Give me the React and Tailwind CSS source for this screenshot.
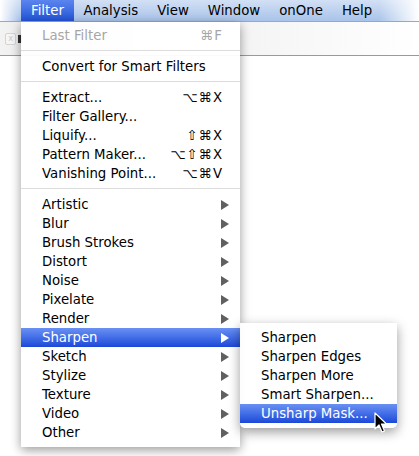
import clsx from "clsx";

const mainItems = [
  { label: "Last Filter", shortcut: "⌘F", disabled: true },
  { sep: true },
  { label: "Convert for Smart Filters" },
  { sep: true },
  { label: "Extract...", shortcut: "⌥⌘X" },
  { label: "Filter Gallery..." },
  { label: "Liquify...", shortcut: "⇧⌘X" },
  { label: "Pattern Maker...", shortcut: "⌥⇧⌘X" },
  { label: "Vanishing Point...", shortcut: "⌥⌘V" },
  { sep: true },
  { label: "Artistic", sub: true },
  { label: "Blur", sub: true },
  { label: "Brush Strokes", sub: true },
  { label: "Distort", sub: true },
  { label: "Noise", sub: true },
  { label: "Pixelate", sub: true },
  { label: "Render", sub: true },
  { label: "Sharpen", sub: true, active: true },
  { label: "Sketch", sub: true },
  { label: "Stylize", sub: true },
  { label: "Texture", sub: true },
  { label: "Video", sub: true },
  { label: "Other", sub: true },
];

const subItems = [
  { label: "Sharpen" },
  { label: "Sharpen Edges" },
  { label: "Sharpen More" },
  { label: "Smart Sharpen..." },
  { label: "Unsharp Mask...", active: true },
];

const Arrow = () => (
  <svg width="8" height="10" viewBox="0 0 8 10">
    <path d="M0 0 L8 5 L0 10 Z" fill="currentColor" />
  </svg>
);

function Row({ label, shortcut, sub, active, disabled }) {
  return (
    <div
      className={clsx(
        "flex h-[19px] items-center justify-between pl-[21px] pr-[11px]",
        active
          ? "bg-gradient-to-b from-[#6a90f4] to-[#1d47d8] text-white"
          : disabled
          ? "text-[#a6a6a6]"
          : "text-black"
      )}
    >
      <span>{label}</span>
      {shortcut && <span className="mr-[6px] tracking-[1px]">{shortcut}</span>}
      {sub && (
        <span className={active ? "text-white" : "text-[#606060]"}>
          <Arrow />
        </span>
      )}
    </div>
  );
}

export default function App() {
  return (
    <div className="relative h-[456px] w-[419px] overflow-hidden bg-white font-['DejaVu_Sans',sans-serif] text-[13.3px] leading-none">
      {/* menu bar */}
      <div className="relative flex h-[22px] items-stretch border-b border-[#8ea9d2] bg-gradient-to-b from-[#d2e0f5] to-[#a9c3ea]">
        <span className="flex w-[21px] items-center pl-[4px] text-[#c5d2e4]">t</span>
        <span className="flex items-center bg-gradient-to-b from-[#5b85ee] to-[#2352d6] px-[10px] text-white">Filter</span>
        {["Analysis", "View", "Window", "onOne", "Help"].map((m) => (
          <span key={m} className="flex items-center px-[9.5px] text-black">
            {m}
          </span>
        ))}
        <div className="absolute inset-y-0 left-0 w-[20px] bg-gradient-to-r from-white to-transparent" />
        <div className="absolute inset-y-0 right-0 w-[40px] bg-gradient-to-r from-transparent to-white" />
      </div>

      {/* toolbar */}
      <div className="flex h-[34px] items-center gap-[2px] border-b border-[#9a9a9a] bg-gradient-to-r from-[#f3f3f3] via-[#e8e8e8] via-10% to-white pl-[5px]">
        <div className="flex h-[12px] w-[11px] items-center justify-center rounded-[2px] border border-[#d4d4d4] bg-[#f5f5f5] text-[8px] text-[#c8c8c8]">x</div>
        <div className="h-[8px] w-[4px] bg-[#333]" />
      </div>

      {/* Filter menu */}
      <div className="absolute left-[21px] top-[22px] w-[219px] bg-white/95 pb-[5px] pt-[4px] shadow-[0_3px_10px_rgba(0,0,0,0.4)]">
        {mainItems.map((it, i) =>
          it.sep ? (
            <div key={i} className="h-[12px] pt-[5px]">
              <div className="h-px bg-[#dcdcdc]" />
            </div>
          ) : (
            <Row key={i} {...it} />
          )
        )}
      </div>

      {/* Sharpen submenu */}
      <div className="absolute left-[240px] top-[323px] w-[157px] rounded-b-[5px] bg-white/95 pb-[5px] pt-[5px] shadow-[0_4px_12px_rgba(0,0,0,0.4)]">
        {subItems.map((it) => (
          <Row key={it.label} {...it} />
        ))}
      </div>

      {/* cursor */}
      <svg className="absolute left-[374px] top-[412px]" width="14" height="22" viewBox="0 0 14 22">
        <path d="M1 1 L1 17 L5 13 L8 20 L10.5 19 L7.5 12 L12.5 12 Z" fill="#000" stroke="#fff" strokeWidth="1.2" strokeLinejoin="round" />
      </svg>
    </div>
  );
}
